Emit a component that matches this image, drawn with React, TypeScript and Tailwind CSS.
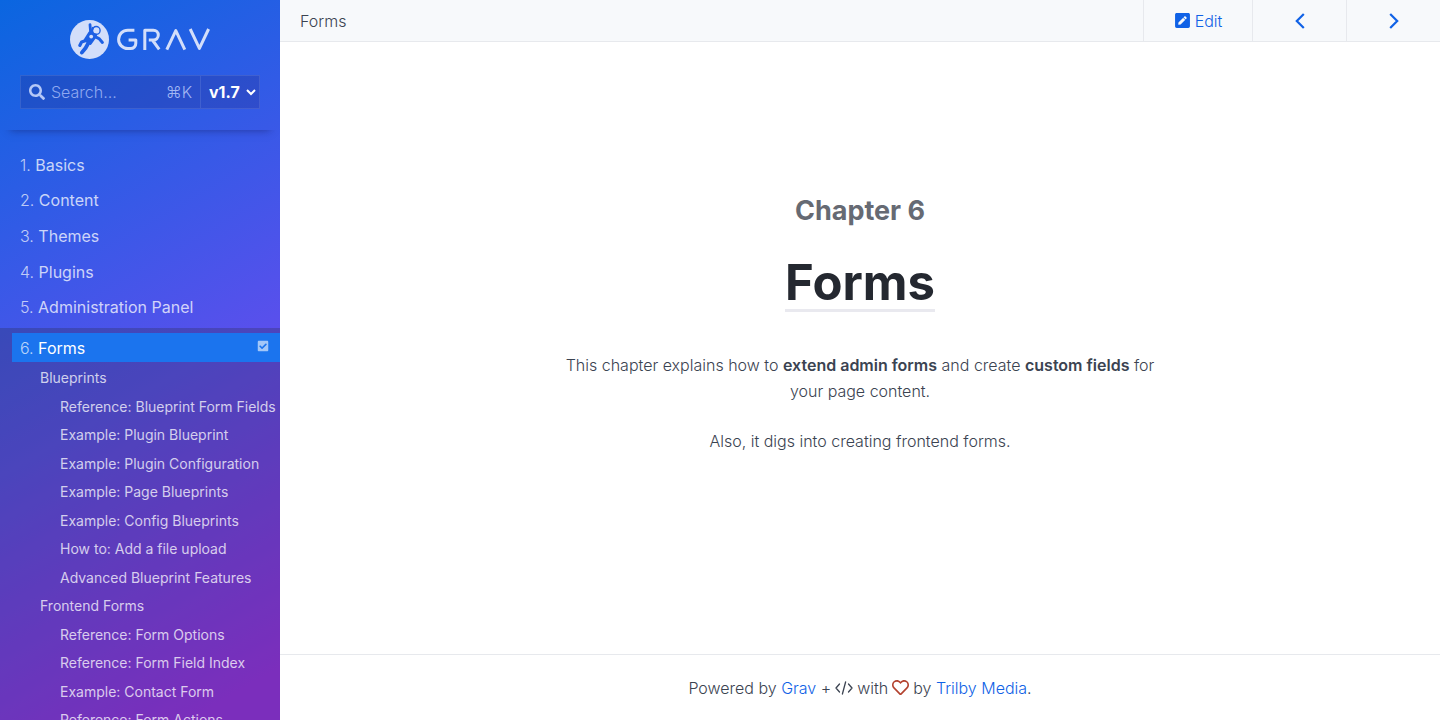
import { FaCheckSquare, FaPenSquare, FaRegHeart, FaSearch } from 'react-icons/fa';
import React from 'react';

const chapters = ['Basics', 'Content', 'Themes', 'Plugins', 'Administration Panel'];

const formPages = [
  { title: 'Blueprints', section: true },
  { title: 'Reference: Blueprint Form Fields' },
  { title: 'Example: Plugin Blueprint' },
  { title: 'Example: Plugin Configuration' },
  { title: 'Example: Page Blueprints' },
  { title: 'Example: Config Blueprints' },
  { title: 'How to: Add a file upload' },
  { title: 'Advanced Blueprint Features' },
  { title: 'Frontend Forms', section: true },
  { title: 'Reference: Form Options' },
  { title: 'Reference: Form Field Index' },
  { title: 'Example: Contact Form' },
  { title: 'Reference: Form Actions' },
  { title: 'How To: Forms in modular pages' },
];

function Logo() {
  return (
    <svg viewBox="0 0 140 39" className="h-[39px] w-[140px]" role="img" aria-label="Grav">
      <circle cx="19.5" cy="19.5" r="19.5" fill="#d3defa" />
      {/* astronaut */}
      <g fill="none" stroke="#1d60e4" strokeLinecap="round" strokeLinejoin="round">
        <path d="M20 4.6 L20.6 12" strokeWidth="2.8" />
        <circle cx="26.2" cy="10.4" r="3.9" strokeWidth="1.4" />
        <path d="M22.8 8 Q21.4 10.4 23 13.4 L26 15" strokeWidth="2.2" />
        <path d="M19.6 12.6 L25.4 16.4 L20.4 23.6 L15 20 Z" fill="#1d60e4" strokeWidth="2.6" />
        <path d="M25 16.6 L29 18.6 L32.4 22.4" strokeWidth="3" />
        <path d="M16 20.4 L11.6 22 L9.8 25.4" strokeWidth="3.2" />
        <path d="M18.4 23 L15.6 28 L11.8 32.6" strokeWidth="3.8" />
      </g>
      <circle cx="21.2" cy="16.6" r="1.9" fill="#d3defa" />
      <g fill="none" stroke="#d3defa" strokeWidth="3" strokeLinejoin="round">
        <path d="M64.4 10.2 H57.8 A9.2 9.2 0 0 0 57.8 28.6 H60.4 A5.2 5.2 0 0 0 65.8 23.2 V20 H58.6" />
        <path d="M74.8 30 V10.2 H83.4 A4.9 4.9 0 0 1 83.4 20 H78.8 M82.4 20 L89.2 29.4" />
        <path d="M96.8 29.6 L105.8 10.6 L114.8 29.6" />
        <path d="M120.2 9 L129.4 28.4 L138.6 9" />
      </g>
    </svg>
  );
}

function Chevron({ points }: { points: string }) {
  return (
    <svg viewBox="0 0 10 16" className="h-4 w-[10px]" fill="none" stroke="currentColor" strokeWidth="2.2" aria-hidden="true">
      <polyline points={points} />
    </svg>
  );
}

function Sidebar() {
  return (
    <aside className="sticky top-0 flex h-screen w-[280px] shrink-0 flex-col overflow-hidden bg-linear-[150deg,#0a66e0_0%,#5850ec_54%,#9832ec_94%,#9832ec_100%]">
      <header className="px-5 pt-5 pb-[21px] shadow-[0_10px_8px_-10px_rgba(20,20,80,0.5)]">
        <a href="#home" className="flex justify-center">
          <Logo />
        </a>
        <div className="mt-4 flex h-[34px] border border-white/10 bg-[#23237d]/25">
          <label className="flex min-w-0 flex-1 items-center px-2">
            <FaSearch className="size-4 shrink-0 text-[#b5c8f7]" />
            <input
              type="search"
              placeholder="Search..."
              aria-label="Search"
              className="ml-1.5 w-full min-w-0 bg-transparent text-base font-light text-white outline-none placeholder:text-[#8fa9f0]"
            />
            <kbd className="font-['Inter','DejaVu_Sans',sans-serif] text-base font-light text-[#a3b7f3]">⌘K</kbd>
          </label>
          <div className="relative flex w-[59px] items-center border-l border-white/10">
            <select aria-label="Version" className="w-full appearance-none bg-transparent pl-2 text-base font-bold text-white outline-none">
              <option>v1.7</option>
              <option>v1.6</option>
            </select>
            <svg viewBox="0 0 10 7" className="pointer-events-none absolute right-[3px] h-[7px] w-[10px]" fill="none" stroke="white" strokeWidth="2" aria-hidden="true">
              <path d="M1 1 L5 5 L9 1" />
            </svg>
          </div>
        </div>
      </header>

      <nav className="pt-[17px] font-light">
        <ul className="grid h-[178px] auto-rows-fr px-5">
          {chapters.map((title, i) => (
            <li key={title} className="flex items-center">
              <a href={`#chapter-${i + 1}`} className="text-base font-normal text-white/75">
                <span className="font-light text-white/70">{i + 1}.</span> {title}
              </a>
            </li>
          ))}
        </ul>
        <div className="mt-[3px] bg-[#23232d]/25 pt-[5px]">
          <a href="#chapter-6" className="ml-3 flex h-[29px] items-center justify-between bg-[#1b74ee] pr-[11px] pl-2 text-base font-normal text-white">
            <span>
              <span className="font-light text-white/70">6.</span> Forms
            </span>
            <FaCheckSquare className="mb-1 size-3 text-white/60" />
          </a>
          <ul className="grid h-[401px] auto-rows-fr pt-0.5">
            {formPages.map((page) => (
              <li key={page.title} className={page.section ? 'flex items-center pl-10' : 'flex items-center pl-[60px]'}>
                <a href="#page" className="text-sm font-normal whitespace-nowrap text-white/75">
                  {page.title}
                </a>
              </li>
            ))}
          </ul>
        </div>
      </nav>
    </aside>
  );
}

export default function App() {
  return (
    <div className="flex min-h-screen bg-white font-['Inter',sans-serif] text-[#3b4351]">
      <Sidebar />

      <div className="flex min-w-0 flex-1 flex-col">
        <div className="flex h-[42px] border-b border-[#e7e9ed] bg-[#f7f9fb]">
          <div className="flex flex-1 items-center pl-5 text-base font-light">Forms</div>
          <a href="#edit" className="flex w-[109px] items-center justify-center gap-1 border-l border-[#e7e9ed] text-base font-light text-[#1062e6]">
            <FaPenSquare className="size-[17px]" /> Edit
          </a>
          <a href="#prev" aria-label="Previous page" className="flex w-[94px] items-center justify-center border-l border-[#e7e9ed] text-[#1062e6]">
            <Chevron points="8.8,1 1.8,8 8.8,15" />
          </a>
          <a href="#next" aria-label="Next page" className="flex w-[94px] items-center justify-center border-l border-[#e7e9ed] text-[#1062e6]">
            <Chevron points="1.2,1 8.2,8 1.2,15" />
          </a>
        </div>

        <main className="flex flex-1 flex-col items-center justify-center px-6 pb-12 text-center">
          <h3 className="text-[27px] leading-8 font-bold text-[#666a73]">Chapter 6</h3>
          <h1 className="mt-[30px] border-b-3 border-[#e9e9ef] text-[49px] leading-[52px] font-bold text-[#242830]">Forms</h1>
          <div className="mt-10 max-w-[600px] space-y-6 text-base leading-[26px] font-light">
            <p>
              This chapter explains how to <strong className="font-semibold">extend admin forms</strong> and create{' '}
              <strong className="font-semibold">custom fields</strong> for your page content.
            </p>
            <p>Also, it digs into creating frontend forms.</p>
          </div>
        </main>

        <footer className="flex h-[66px] items-center justify-center gap-1 border-t border-[#e7e9ed] text-base font-light">
          <span>
            Powered by <a href="#grav" className="text-[#1062e6]">Grav</a> +
          </span>
          <svg viewBox="0 0 18 14" className="h-[14px] w-[18px]" fill="none" stroke="currentColor" strokeWidth="1.3" strokeLinecap="round" strokeLinejoin="round" role="img" aria-label="code">
            <path d="M4.5 3 L1 7 L4.5 11 M13.5 3 L17 7 L13.5 11 M10.6 1 L7.4 13" />
          </svg>
          <span>with</span>
          <FaRegHeart className="size-[17px] text-[#b3422f]" aria-label="love" />
          <span>
            by <a href="#trilby" className="text-[#1062e6]">Trilby Media</a>.
          </span>
        </footer>
      </div>
    </div>
  );
}
